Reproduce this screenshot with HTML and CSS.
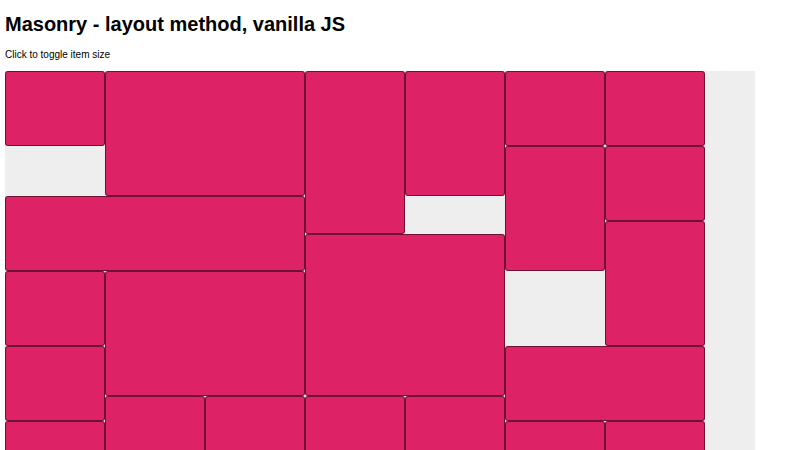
FILE: index.html
```html
<!DOCTYPE html>
<html lang="en">
<head>
<meta charset="utf-8">
<title>Masonry - layout method, vanilla JS</title>
<link rel="stylesheet" href="styles.css">
</head>
<body>
<h1 class="title">Masonry - layout method, vanilla JS</h1>
<p class="hint">Click to toggle item size</p>
<div class="grid">
  <div class="grid-item" style="--c:1;--r:1"></div>
  <div class="grid-item w2 h10" style="--c:2;--r:1"></div>
  <div class="grid-item h13" style="--c:4;--r:1"></div>
  <div class="grid-item h10" style="--c:5;--r:1"></div>
  <div class="grid-item" style="--c:6;--r:1"></div>
  <div class="grid-item" style="--c:7;--r:1"></div>
  <div class="grid-item h10" style="--c:6;--r:7"></div>
  <div class="grid-item" style="--c:7;--r:7"></div>
  <div class="grid-item w3" style="--c:1;--r:11"></div>
  <div class="grid-item w2 h13" style="--c:4;--r:14"></div>
  <div class="grid-item h10" style="--c:7;--r:13"></div>
  <div class="grid-item" style="--c:1;--r:17"></div>
  <div class="grid-item w2 h10" style="--c:2;--r:17"></div>
  <div class="grid-item" style="--c:1;--r:23"></div>
  <div class="grid-item w2" style="--c:6;--r:23"></div>
  <div class="grid-item" style="--c:2;--r:27"></div>
  <div class="grid-item" style="--c:3;--r:27"></div>
  <div class="grid-item" style="--c:4;--r:27"></div>
  <div class="grid-item" style="--c:5;--r:27"></div>
  <div class="grid-item" style="--c:1;--r:29"></div>
  <div class="grid-item" style="--c:6;--r:29"></div>
  <div class="grid-item" style="--c:7;--r:29"></div>
</div>
</body>
</html>
```
FILE: styles.css
```css
* {
  box-sizing: border-box;
}

body {
  margin: 0;
  padding: 0 5px;
  font-family: "Liberation Sans", Arial, sans-serif;
  color: #000;
  background: #fff;
}

.title {
  margin: 12px 0 0;
  font-size: 20px;
  line-height: 24px;
  font-weight: bold;
}

.hint {
  margin: 12px 0 0;
  font-size: 10px;
  line-height: 13px;
}

.grid {
  margin-top: 10px;
  width: 750px;
  display: grid;
  grid-template-columns: repeat(7, 100px);
  grid-auto-rows: 12.5px;
  background: #eee;
}

.grid-item {
  --w: 1;
  --h: 6;
  grid-column: var(--c) / span var(--w);
  grid-row: var(--r) / span var(--h);
  background: #dd2266;
  border: 1.25px solid hsla(0, 0%, 0%, 0.5);
  border-radius: 3px;
}

.w2 { --w: 2; }
.w3 { --w: 3; }
.h10 { --h: 10; }
.h13 { --h: 13; }
```
